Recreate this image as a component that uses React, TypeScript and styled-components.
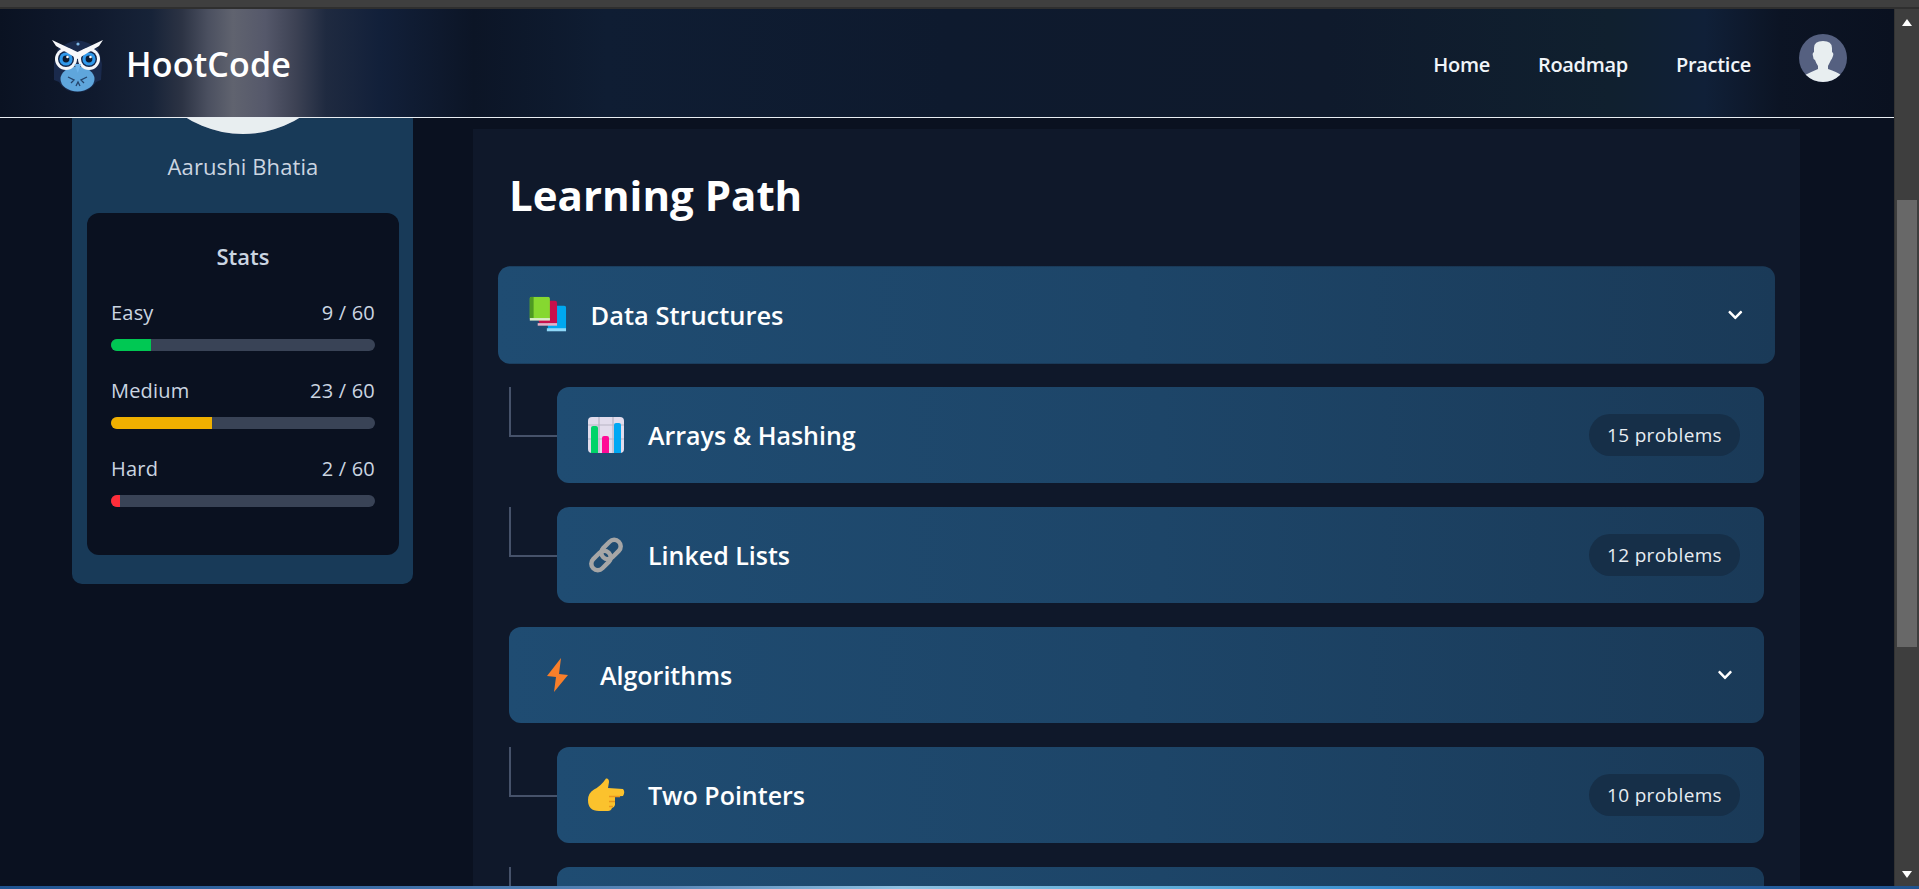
import React from 'react';
import styled, { createGlobalStyle } from 'styled-components';
import { FaChevronDown } from 'react-icons/fa';

const GlobalStyle = createGlobalStyle`
  html, body {
    margin: 0;
    height: 100%;
    overflow: hidden;
    background: #0a1120;
    font-family: "Open Sans", "Noto Sans", sans-serif;
  }
`;

const Screen = styled.div`
  display: flex;
  flex-direction: column;
  height: 889px;
`;

const TopStrip = styled.div`
  flex: 0 0 9px;
  box-sizing: border-box;
  background: #3f3f3f;
  border-bottom: 2px solid #2f2f2f;
`;

const Window = styled.div`
  flex: 1;
  display: flex;
  min-height: 0;
`;

const Viewport = styled.div`
  flex: 1;
  position: relative;
  overflow: hidden;
  background: #0a1120;
`;

const Scrollbar = styled.div`
  flex: 0 0 24px;
  box-sizing: border-box;
  display: flex;
  flex-direction: column;
  align-items: center;
  justify-content: space-between;
  padding: 10px 2px 8px;
  background: #3e3e3e;
  border-left: 1px solid #333;
`;

const ScrollArrow = styled.div<{ $down?: boolean }>`
  width: 0;
  height: 0;
  border-left: 5px solid transparent;
  border-right: 5px solid transparent;
  ${p => (p.$down ? 'border-top: 7px solid #fff;' : 'border-bottom: 7px solid #fff;')}
`;

const ScrollThumb = styled.div`
  width: 20px;
  height: 447px;
  margin-top: 174px;
  margin-bottom: auto;
  background: #686868;
`;

const Taskbar = styled.div`
  flex: 0 0 3px;
  background: linear-gradient(90deg, #1f5390 0%, #3d6ea6 20%, #5b88b8 35%, #8fc0e0 47%, #62aed8 60%, #3a8fd0 72%, #2a68ac 85%, #1f5390 100%);
`;

const Navbar = styled.header`
  position: absolute;
  top: 0;
  left: 0;
  right: 0;
  z-index: 5;
  height: 108px;
  display: flex;
  align-items: center;
  justify-content: space-between;
  padding: 0 47px 0 50px;
  border-bottom: 1px solid #e8edf2;
  background: linear-gradient(
    90deg,
    #0a1222 0%,
    #101a2e 5%,
    #172338 8%,
    #2c3344 9.6%,
    #4b5060 11%,
    #60636f 12.3%,
    #55586a 14%,
    #3d4254 15.6%,
    #1f2a40 17.2%,
    #12203a 20%,
    #0c1526 25%,
    #0f1d33 32%,
    #0e1a2e 50%,
    #0f1a2c 70%,
    #10202f 85%,
    #102038 90%,
    #0c1424 94%,
    #0a1120 100%
  );
`;

const Brand = styled.div`
  display: flex;
  align-items: center;
  gap: 20px;
`;

const BrandName = styled.span`
  font-size: 34px;
  font-weight: 600;
  letter-spacing: 0.2px;
  margin-top: 2px;
  color: #fff;
`;

const NavLinks = styled.nav`
  display: flex;
  align-items: center;
  gap: 48px;
`;

const NavLink = styled.a`
  font-size: 20px;
  font-weight: 600;
  letter-spacing: -0.3px;
  color: #f1f5f9;
  margin-top: 3px;
`;

const NavAvatar = styled.div`
  display: flex;
  margin-top: -10px;
`;

// the page is scrolled down, so everything starts above the top of the viewport
const Layout = styled.div`
  display: flex;
  align-items: flex-start;
  gap: 60px;
  margin-top: -121px;
  padding: 0 94px 0 72px;
`;

const Sidebar = styled.aside`
  flex: 0 0 341px;
  box-sizing: border-box;
  display: flex;
  flex-direction: column;
  align-items: center;
  padding: 32px 14px 29px 15px;
  background: #183a58;
  border-radius: 0 0 10px 10px;
`;

const ProfileName = styled.div`
  margin: 17px 0 32px;
  font-size: 22px;
  line-height: 30px;
  letter-spacing: 0.1px;
  color: #cbd5e1;
`;

const StatsCard = styled.div`
  align-self: stretch;
  padding: 29px 24px 48px;
  background: #0a1120;
  border-radius: 12px;
  color: #cbd5e1;
`;

const StatsTitle = styled.h3`
  margin: 0 0 29px;
  font-size: 22px;
  line-height: 28px;
  font-weight: 600;
  text-align: center;
`;

const StatRow = styled.div`
  margin-bottom: 26px;
  &:last-child {
    margin-bottom: 0;
  }
`;

const StatLabels = styled.div`
  display: flex;
  justify-content: space-between;
  margin-bottom: 12px;
  font-size: 20px;
  line-height: 28px;
  font-weight: 500;
  letter-spacing: 0.2px;
`;

const StatTrack = styled.div`
  height: 12px;
  background: #394356;
  border-radius: 6px;
  overflow: hidden;
`;

const StatFill = styled.div<{ $color: string }>`
  height: 100%;
  background: ${p => p.$color};
`;

const Main = styled.main`
  flex: 1;
  min-width: 0;
  margin-top: 241px;
  padding: 38px 36px 40px;
  background: #0f182a;
`;

const Title = styled.h1`
  margin: 0 0 44px 0;
  font-size: 42px;
  line-height: 56px;
  font-weight: 700;
  color: #fff;
`;

const PathList = styled.div`
  display: flex;
  flex-direction: column;
  gap: 24px;
`;

const Row = styled.div<{ $sub?: boolean; $hovered?: boolean }>`
  position: relative;
  box-sizing: border-box;
  height: 96px;
  display: flex;
  align-items: center;
  gap: 25px;
  padding: 0 31px;
  margin-left: ${p => (p.$sub ? '48px' : '0')};
  padding-right: ${p => (p.$sub ? '24px' : '31px')};
  border-radius: 12px;
  background: linear-gradient(90deg, #1f4c72 0%, #1d4568 50%, #1a3a58 100%);
  color: #fff;
  ${p => p.$hovered && 'transform: scale(1.0175);'}
  ${p =>
    p.$sub &&
    `&::before {
      content: '';
      position: absolute;
      left: -48px;
      top: 0;
      width: 48px;
      height: 50px;
      box-sizing: border-box;
      border-left: 2px solid #46526a;
      border-bottom: 2px solid #46526a;
    }`}
`;

const RowIcon = styled.span`
  flex: 0 0 36px;
  display: flex;
`;

const RowLabel = styled.span`
  flex: 1;
  font-size: 25px;
  font-weight: 600;
  margin-left: -1px;
`;

const Chevron = styled(FaChevronDown)`
  flex: 0 0 16px;
  color: #fff;
`;

const ProblemPill = styled.span`
  padding: 0 18px;
  height: 42px;
  line-height: 42px;
  border-radius: 21px;
  background: #162f48;
  font-size: 19px;
  letter-spacing: 0.35px;
  color: #e8edf2;
`;

const stats = [
  { name: 'Easy', solved: 9, color: '#00c853' },
  { name: 'Medium', solved: 23, color: '#f0b000' },
  { name: 'Hard', solved: 2, color: '#ff2d3a' },
];

const OwlLogo = () => (
  <svg width="56" height="58" viewBox="0 0 56 58">
    <path d="M8 14 L18 9 Q28 4 38 9 L48 14 L52 30 L51 46 L46 48 Q40 58 28 58 Q14 58 9 48 L4 46 L4 30 Z" fill="#1a2a4c" />
    <ellipse cx="27.5" cy="45" rx="17" ry="12.5" fill="#5fa6dc" />
    <path d="M18 43l6 3-3 3M37 43l-6 3 3 3M26 52l2-4 2 4" stroke="#24436a" strokeWidth="1.3" fill="none" />
    <circle cx="16" cy="25" r="11" fill="#f5f7fa" />
    <circle cx="39" cy="25" r="11" fill="#f5f7fa" />
    <circle cx="16" cy="25" r="8" fill="#12264a" />
    <circle cx="39" cy="25" r="8" fill="#12264a" />
    <circle cx="16" cy="25" r="6.6" fill="#2f98ea" />
    <circle cx="39" cy="25" r="6.6" fill="#2f98ea" />
    <circle cx="16" cy="25" r="3.4" fill="#0c1a30" />
    <circle cx="39" cy="25" r="3.4" fill="#0c1a30" />
    <circle cx="17.5" cy="23" r="1.3" fill="#fff" />
    <circle cx="40.5" cy="23" r="1.3" fill="#fff" />
    <path d="M2 6 L27.5 18 L53 6 L49 12 L27.5 25 L6 12 Z" fill="#f7f8fa" />
    <circle cx="28" cy="10" r="1.6" fill="#7db8e8" />
    <path d="M24.5 30 L31 30 L27.8 39 Z" fill="#6fb4ea" />
  </svg>
);

const UserAvatar = ({ size }: { size: number }) => (
  <svg width={size} height={size} viewBox="0 0 48 48" style={{ display: 'block', flexShrink: 0 }}>
    <clipPath id={`avatar-${size}`}>
      <circle cx="24" cy="24" r="24" />
    </clipPath>
    <g clipPath={`url(#avatar-${size})`}>
      <rect width="48" height="48" fill="#556080" />
      <path
        d="M15 14 Q15 7 24 7 Q33 7 33 14 L33 18 Q35 19 34 22 Q33 25 32 26 Q30 30 29 32 L29 35 Q38 38 42 41 L42 48 L6 48 L6 41 Q12 38 19 35 L19 32 Q17 29 16 26 Q14 25 14 22 Q13 19 15 18 Z"
        fill="#e8eef0"
      />
    </g>
  </svg>
);

const BooksIcon = () => (
  <svg width="36" height="36" viewBox="0 0 36 36">
    <path d="M18 9h16a2 2 0 0 1 2 2v21H20a2 2 0 0 1-2-2z" fill="#00a8f0" />
    <rect x="17" y="31" width="19" height="3" fill="#8fd8f8" />
    <path d="M9 4h16a2 2 0 0 1 2 2v20H11a2 2 0 0 1-2-2z" fill="#c8104c" />
    <rect x="8" y="26" width="19" height="2.5" fill="#e8b0c4" />
    <path d="M2 0h16a2 2 0 0 1 2 2v21H2a2 2 0 0 1-2-2V2a2 2 0 0 1 2-2z" fill="#86d830" />
    <path d="M0 2a2 2 0 0 1 2-2h2v21H0z" fill="#4e9a22" />
    <rect x="0" y="21" width="20" height="2.5" fill="#d8ecc8" />
  </svg>
);

const ChartIcon = () => (
  <svg width="36" height="36" viewBox="0 0 36 36">
    <rect width="36" height="36" rx="4" fill="#e2dcec" />
    <path d="M11 0v36M25 0v36M0 8h36M0 22h36" stroke="#b8b4c4" strokeWidth="1.2" />
    <path d="M3 11a2 2 0 0 1 2-2h3a2 2 0 0 1 2 2v25H3z" fill="#00d468" />
    <path d="M14 21a2 2 0 0 1 2-2h3a2 2 0 0 1 2 2v15h-7z" fill="#ff0a96" />
    <path d="M26 8a2 2 0 0 1 2-2h3a2 2 0 0 1 2 2v28h-7z" fill="#00a8f4" />
  </svg>
);

const LinkIcon = () => (
  <svg width="36" height="36" viewBox="0 0 36 36" fill="none" stroke="#a6a6a6" strokeWidth="4.5">
    <rect x="2" y="17" width="22" height="13" rx="6.5" transform="rotate(-45 13 23.5)" />
    <rect x="12" y="6" width="22" height="13" rx="6.5" transform="rotate(-45 23 12.5)" />
  </svg>
);

const BoltIcon = () => (
  <svg width="36" height="36" viewBox="0 0 36 36">
    <path d="M21 1 L7 19 L16 20 L14 35 L28 18 L19 17 Z" fill="#f97f2a" />
  </svg>
);

const PointingHandIcon = () => (
  <svg width="36" height="36" viewBox="0 0 36 36" style={{ overflow: 'visible' }}>
    <path
      d="M18 1.5 Q21 1 21 5 L20 11 L35 12 Q37.5 15 35 19 L27 19.5 L27 28 Q26 31 24 31 Q23 34 20 34 L11 34 Q0 34 0 23 Q0 16 6 12.5 Q13 9 18 1.5 Z"
      fill="#fbc22d"
    />
    <path d="M21 19.5 H32 M21 24.5 H27 M21 29.5 H25" stroke="#e9961c" strokeWidth="1.4" />
  </svg>
);

const App = () => (
  <Screen>
    <GlobalStyle />
    <TopStrip />
    <Window>
      <Viewport>
        <Navbar>
          <Brand>
            <OwlLogo />
            <BrandName>HootCode</BrandName>
          </Brand>
          <NavLinks>
            <NavLink>Home</NavLink>
            <NavLink>Roadmap</NavLink>
            <NavLink>Practice</NavLink>
            <NavAvatar>
              <UserAvatar size={48} />
            </NavAvatar>
          </NavLinks>
        </Navbar>
        <Layout>
          <Sidebar>
            <UserAvatar size={214} />
            <ProfileName>Aarushi Bhatia</ProfileName>
            <StatsCard>
              <StatsTitle>Stats</StatsTitle>
              {stats.map(stat => (
                <StatRow key={stat.name}>
                  <StatLabels>
                    <span>{stat.name}</span>
                    <span>{stat.solved} / 60</span>
                  </StatLabels>
                  <StatTrack>
                    <StatFill $color={stat.color} style={{ width: `${(stat.solved / 60) * 100}%` }} />
                  </StatTrack>
                </StatRow>
              ))}
            </StatsCard>
          </Sidebar>
          <Main>
            <Title>Learning Path</Title>
            <PathList>
              <Row $hovered>
                <RowIcon><BooksIcon /></RowIcon>
                <RowLabel>Data Structures</RowLabel>
                <Chevron size={16} />
              </Row>
              <Row $sub>
                <RowIcon><ChartIcon /></RowIcon>
                <RowLabel>Arrays &amp; Hashing</RowLabel>
                <ProblemPill>15 problems</ProblemPill>
              </Row>
              <Row $sub>
                <RowIcon><LinkIcon /></RowIcon>
                <RowLabel>Linked Lists</RowLabel>
                <ProblemPill>12 problems</ProblemPill>
              </Row>
              <Row>
                <RowIcon><BoltIcon /></RowIcon>
                <RowLabel>Algorithms</RowLabel>
                <Chevron size={16} />
              </Row>
              <Row $sub>
                <RowIcon><PointingHandIcon /></RowIcon>
                <RowLabel>Two Pointers</RowLabel>
                <ProblemPill>10 problems</ProblemPill>
              </Row>
              <Row $sub />
            </PathList>
          </Main>
        </Layout>
      </Viewport>
      <Scrollbar>
        <ScrollArrow />
        <ScrollThumb />
        <ScrollArrow $down />
      </Scrollbar>
    </Window>
    <Taskbar />
  </Screen>
);

export default App;
